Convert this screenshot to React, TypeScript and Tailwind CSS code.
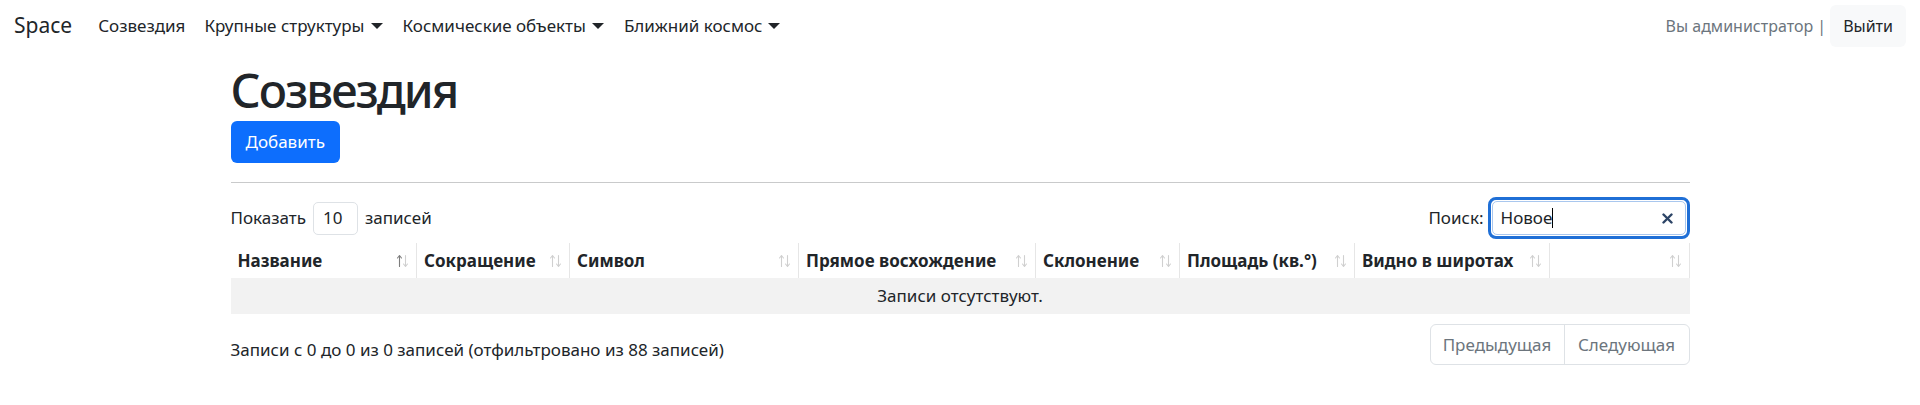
import React from 'react';

const columns = [
  { title: 'Название', width: 186, active: true },
  { title: 'Сокращение', width: 153 },
  { title: 'Символ', width: 229 },
  { title: 'Прямое восхождение', width: 237 },
  { title: 'Склонение', width: 144 },
  { title: 'Площадь (кв.°)', width: 175 },
  { title: 'Видно в широтах', width: 195 },
  { title: '', width: 140 },
];

function SortIcon({ active }: { active?: boolean }) {
  return (
    <svg width="13" height="14" viewBox="0 0 13 14" fill="none" strokeWidth="1.1" strokeLinecap="round" strokeLinejoin="round">
      <path d="M3.5 1.5V12.5M1.5 4L3.5 1.5L5.5 4" stroke={active ? '#7d7d7d' : '#d0d0d0'} />
      <path d="M9.5 1.5V12.5M7.5 10L9.5 12.5L11.5 10" stroke="#d0d0d0" />
    </svg>
  );
}

function Caret() {
  return <span className="ml-[6px] inline-block h-0 w-0 border-x-[6px] border-t-[6px] border-x-transparent border-t-[#212529] align-middle" />;
}

export default function App() {
  return (
    <div className="min-h-[405px] bg-white font-['Noto_Sans',sans-serif] text-[17px] text-[#212529]">
      {/* Navbar */}
      <nav className="flex h-[52px] items-center justify-between px-[14px]">
        <div className="flex items-center">
          <span className="mr-[17px] text-[21px]">Space</span>
          <a className="px-[9px] text-[#212529]">Созвездия</a>
          <a className="flex items-center px-[10px] text-[#212529]">
            Крупные структуры <Caret />
          </a>
          <a className="flex items-center px-[10px] text-[#212529]">
            Космические объекты <Caret />
          </a>
          <a className="flex items-center px-[10px] text-[#212529]">
            Ближний космос <Caret />
          </a>
        </div>
        <div className="flex items-center text-[16px]">
          <span className="text-[#6c757d]">Вы администратор |</span>
          <button className="ml-[4px] h-[42px] rounded-[6px] bg-[#f8f9fa] px-[13px] text-[#212529]">Выйти</button>
        </div>
      </nav>

      {/* Content */}
      <main className="mx-auto w-[1459px]">
        <h1 className="mt-[7px] h-[62px] text-[47px] font-medium leading-[62px] tracking-[-2px]">Созвездия</h1>
        <button className="h-[42px] rounded-[6px] bg-[#0d6efd] px-[15px] text-white">Добавить</button>
        <hr className="mt-[19px] border-t border-[#c9cacb]" />

        <div className="mt-[18px] flex h-[34px] items-center justify-between">
          <div className="flex items-center">
            <span>Показать</span>
            <span className="mx-[7px] flex h-[33px] w-[45px] items-center rounded-[5px] border border-[#dee2e6] pl-[9px]">10</span>
            <span>записей</span>
          </div>
          <div className="flex items-center">
            <span className="mr-[4px]">Поиск:</span>
            <div className="rounded-[8px] border-[3px] border-[#1f6fd6] p-px">
              <div className="flex h-[34px] w-[194px] items-center rounded-[5px] border border-[#a9c7ee] pl-[8px] pr-[12px]">
                <span>Новое</span>
                <span className="h-[20px] w-px bg-black" />
                <svg className="ml-auto" width="11" height="11" viewBox="0 0 11 11">
                  <path d="M1.5 1.5L9.5 9.5M9.5 1.5L1.5 9.5" stroke="#2c4466" strokeWidth="2.4" strokeLinecap="round" />
                </svg>
              </div>
            </div>
          </div>
        </div>

        <table className="mt-[8px] w-full table-fixed border-collapse">
          <colgroup>
            {columns.map((c, i) => (
              <col key={i} style={{ width: c.width }} />
            ))}
          </colgroup>
          <thead>
            <tr className="h-[35px]">
              {columns.map((c, i) => (
                <th key={i} className="border-r border-[#e6e6e6] px-[7px] text-left font-bold">
                  <div className="flex items-center justify-between">
                    <span className="whitespace-nowrap">{c.title}</span>
                    <SortIcon active={c.active} />
                  </div>
                </th>
              ))}
            </tr>
          </thead>
          <tbody>
            <tr className="h-[36px] bg-[#f2f2f2]">
              <td colSpan={8} className="text-center">Записи отсутствуют.</td>
            </tr>
          </tbody>
        </table>

        <div className="mt-[10px] flex items-start justify-between">
          <div className="pt-[13px]">Записи с 0 до 0 из 0 записей (отфильтровано из 88 записей)</div>
          <div className="flex h-[41px] rounded-[6px] border border-[#dee2e6] text-[#6c757d]">
            <span className="flex w-[134px] items-center justify-center border-r border-[#dee2e6]">Предыдущая</span>
            <span className="flex w-[124px] items-center justify-center">Следующая</span>
          </div>
        </div>
      </main>
    </div>
  );
}
